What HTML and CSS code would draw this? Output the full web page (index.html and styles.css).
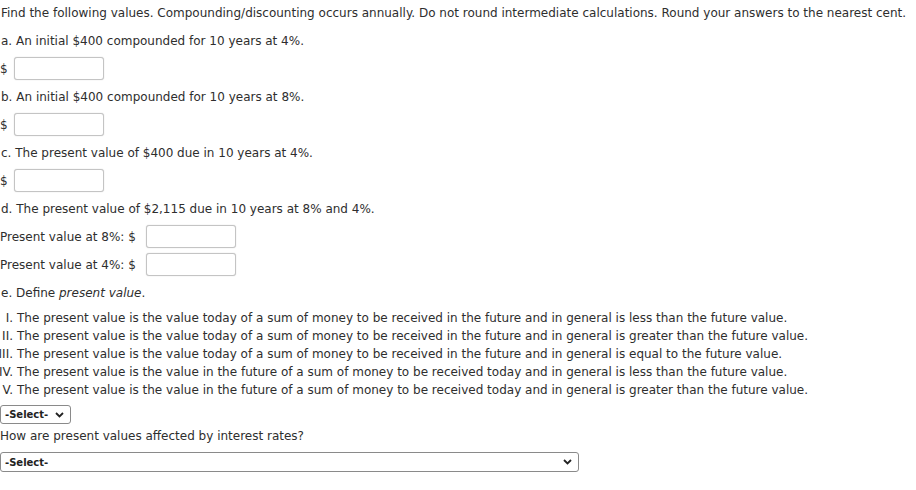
FILE: index.html
```html
<!DOCTYPE html>
<html>
<head>
<meta charset="utf-8">
<link rel="stylesheet" href="styles.css">
</head>
<body>
<div class="page">
  <p class="line first">Find the following values. Compounding/discounting occurs annually. Do not round intermediate calculations. Round your answers to the nearest cent.</p>

  <p class="line q qa">a. An initial $400 compounded for 10 years at 4%.</p>
  <div class="row"><span class="cur">$</span><span class="box"></span></div>

  <p class="line q">b. An initial $400 compounded for 10 years at 8%.</p>
  <div class="row"><span class="cur">$</span><span class="box"></span></div>

  <p class="line q">c. The present value of $400 due in 10 years at 4%.</p>
  <div class="row"><span class="cur">$</span><span class="box"></span></div>

  <p class="line q">d. The present value of $2,115 due in 10 years at 8% and 4%.</p>
  <div class="row"><span class="lbl">Present value at 8%: $</span><span class="box"></span></div>
  <div class="row row2"><span class="lbl">Present value at 4%: $</span><span class="box"></span></div>

  <p class="line q">e. Define <i>present value</i>.</p>
  <div class="opts">
    <div class="opt"><span class="num">I.</span><span>The present value is the value today of a sum of money to be received in the future and in general is less than the future value.</span></div>
    <div class="opt"><span class="num">II.</span><span>The present value is the value today of a sum of money to be received in the future and in general is greater than the future value.</span></div>
    <div class="opt"><span class="num">III.</span><span>The present value is the value today of a sum of money to be received in the future and in general is equal to the future value.</span></div>
    <div class="opt"><span class="num">IV.</span><span>The present value is the value in the future of a sum of money to be received today and in general is less than the future value.</span></div>
    <div class="opt"><span class="num">V.</span><span>The present value is the value in the future of a sum of money to be received today and in general is greater than the future value.</span></div>
  </div>
  <div class="sel small"><span class="sel-text">-Select-</span><svg class="chev" width="9" height="6" viewBox="0 0 9 6"><path d="M1 1 L4.5 4.5 L8 1" fill="none" stroke="#222" stroke-width="1.8"/></svg></div>

  <p class="line how">How are present values affected by interest rates?</p>
  <div class="sel wide"><span class="sel-text">-Select-</span><svg class="chev" width="9" height="6" viewBox="0 0 9 6"><path d="M1 1 L4.5 4.5 L8 1" fill="none" stroke="#222" stroke-width="1.8"/></svg></div>
</div>
</body>
</html>
```

FILE: styles.css
```css
html, body {
  margin: 0;
  padding: 0;
  background: #fff;
}
.page {
  font-family: "DejaVu Sans", Verdana, sans-serif;
  font-size: 12px;
  color: #2e2e2e;
  padding-left: 1px;
  display: flex;
  flex-direction: column;
  align-items: flex-start;
}
.line {
  margin: 0;
  line-height: 18px;
  height: 18px;
  white-space: nowrap;
}
.first { margin-top: 4px; }
.q { margin-top: 8px; }
.qa { margin-top: 10px; }
.row {
  display: flex;
  align-items: center;
  margin-top: 7px;
  height: 23px;
}
.row2 { margin-top: 5px; }
.cur { width: 14px; margin-left: -1px; }
.lbl { margin-left: -1px; margin-right: 10px; }
.box {
  width: 88px;
  height: 21px;
  border: 1px solid #c4c4c4;
  border-radius: 3px;
  box-shadow: 0 0 1px rgba(0,0,0,0.25);
  background: #fff;
}
.opts {
  margin-top: 7px;
  display: flex;
  flex-direction: column;
}
.opt {
  display: flex;
  line-height: 18px;
  white-space: nowrap;
}
.num {
  width: 12px;
  display: flex;
  justify-content: flex-end;
  margin-right: 4px;
}
.sel {
  display: flex;
  align-items: center;
  justify-content: space-between;
  box-sizing: border-box;
  border: 1px solid #8a8a8a;
  border-radius: 3px;
  background: #fff;
  font-weight: bold;
  font-size: 10px;
  color: #222;
  padding: 0 6px 0 4px;
  margin-left: -1px;
}
.small {
  width: 71px;
  height: 19px;
  margin-top: 6px;
}
.wide {
  width: 579px;
  height: 20px;
  margin-top: 7px;
}
.how { margin-top: 3px; margin-left: -1px; }
```
